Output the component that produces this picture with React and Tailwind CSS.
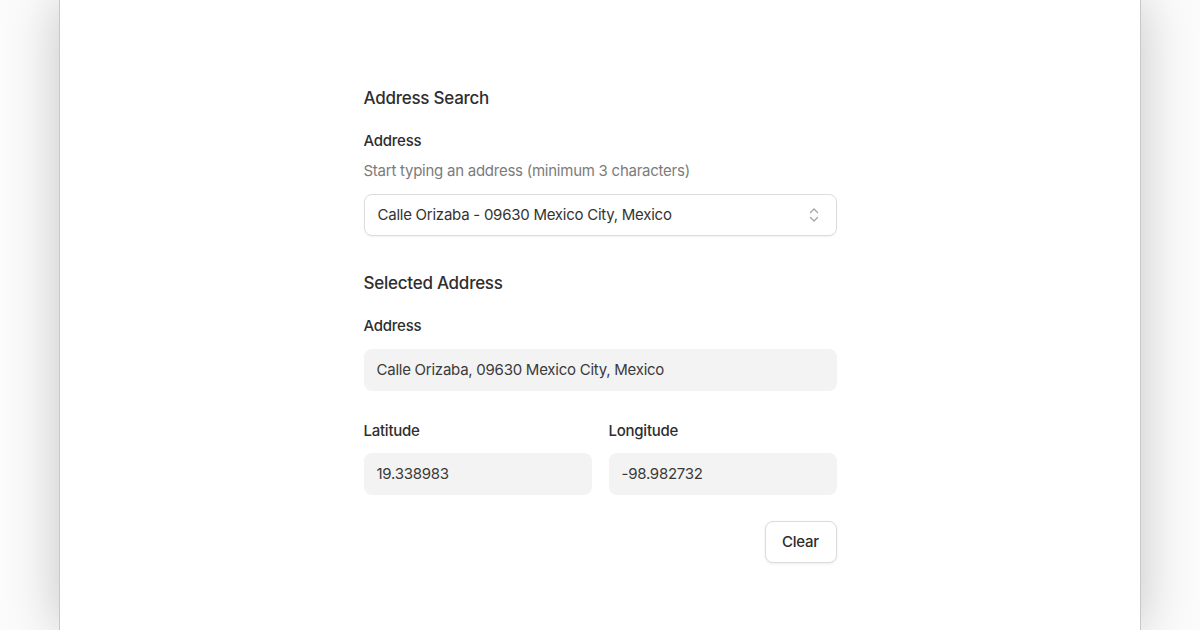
export default function App() {
  return (
    <div className="min-h-[630px] h-[630px] overflow-hidden bg-[#fbfbfb] flex justify-center font-['Inter',sans-serif] text-[#2e2e2e] tracking-[-0.25px]">
      <div className="w-[1082px] h-full bg-white border-x border-[#c9c9c9] shadow-[0_0_50px_rgba(0,0,0,0.22)] flex justify-center">
        <div className="w-[473px] pt-[86px] flex flex-col">
          <h2 className="text-[17px] font-medium leading-[24px]">Address Search</h2>

          <label className="mt-[20px] text-[15px] font-medium leading-[22px]">Address</label>
          <p className="mt-[8px] text-[15px] leading-[22px] text-[#7b7b7b]">
            Start typing an address (minimum 3 characters)
          </p>
          <div className="mt-[12px] h-[42px] rounded-[8px] border border-[#dcdcdc] shadow-[0_1px_2px_rgba(0,0,0,0.06)] flex items-center justify-between pl-[13px] pr-[17px]">
            <span className="text-[15px] text-[#333]">Calle Orizaba - 09630 Mexico City, Mexico</span>
            <svg width="10" height="16" viewBox="0 0 10 16" fill="none" stroke="#a6a6a6" strokeWidth="1.4" strokeLinecap="round" strokeLinejoin="round">
              <path d="M1.5 5.5 L5 2 L8.5 5.5" />
              <path d="M1.5 10.5 L5 14 L8.5 10.5" />
            </svg>
          </div>

          <h2 className="mt-[35px] text-[17px] font-medium leading-[24px]">Selected Address</h2>

          <label className="mt-[20px] text-[15px] font-medium leading-[22px]">Address</label>
          <div className="mt-[12px] h-[42px] rounded-[8px] bg-[#f3f3f3] flex items-center px-[13px]">
            <span className="text-[15px] text-[#3a3a3a]">Calle Orizaba, 09630 Mexico City, Mexico</span>
          </div>

          <div className="mt-[29px] grid grid-cols-2 gap-[17px]">
            <div className="flex flex-col">
              <label className="text-[15px] font-medium leading-[22px]">Latitude</label>
              <div className="mt-[11px] h-[42px] rounded-[8px] bg-[#f3f3f3] flex items-center px-[13px]">
                <span className="text-[15px] text-[#3a3a3a]">19.338983</span>
              </div>
            </div>
            <div className="flex flex-col">
              <label className="text-[15px] font-medium leading-[22px]">Longitude</label>
              <div className="mt-[11px] h-[42px] rounded-[8px] bg-[#f3f3f3] flex items-center px-[13px]">
                <span className="text-[15px] text-[#3a3a3a]">-98.982732</span>
              </div>
            </div>
          </div>

          <div className="mt-[26px] flex justify-end">
            <button className="w-[72px] h-[42px] rounded-[8px] border border-[#dcdcdc] bg-white shadow-[0_1px_3px_rgba(0,0,0,0.08)] text-[15px] font-medium text-[#2b2b2b]">
              Clear
            </button>
          </div>
        </div>
      </div>
    </div>
  )
}
